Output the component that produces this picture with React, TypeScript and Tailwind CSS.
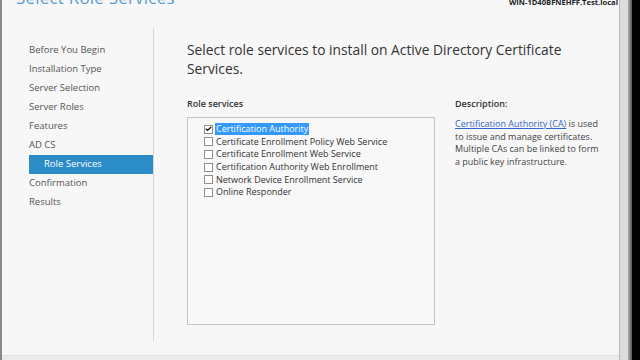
import { Check } from "lucide-react";

const steps = [
  "Before You Begin",
  "Installation Type",
  "Server Selection",
  "Server Roles",
  "Features",
  "AD CS",
  "Role Services",
  "Confirmation",
  "Results",
];

const services = [
  "Certification Authority",
  "Certificate Enrollment Policy Web Service",
  "Certificate Enrollment Web Service",
  "Certification Authority Web Enrollment",
  "Network Device Enrollment Service",
  "Online Responder",
];

export default function App() {
  return (
    <div className="w-[640px] h-[360px] overflow-hidden flex bg-black" style={{ fontFamily: '"Open Sans", "Noto Sans", sans-serif' }}>
      <div className="w-[620px] h-full flex flex-col bg-[#f7f7f7] border-l-2 border-[#8a8a8a] border-r border-r-[#b8b8b8]">
        {/* header */}
        <div className="h-[28px] flex justify-between px-[14px] overflow-hidden">
          <div className="text-[17px] leading-[20px] -mt-[12px] text-[#5b9bd1] tracking-[0.2px]">Select Role Services</div>
          <div className="text-[7.6px] leading-[8px] -mt-[2px] font-bold text-[#222] mr-[-13px]">WIN-1D40BFNEHFF.Test.local</div>
        </div>
        {/* body */}
        <div className="flex-1 flex">
          <div className="w-[152px] border-r border-[#d6d6d6] pt-[13px] mb-[14px]">
            {steps.map((s) => (
              <div
                key={s}
                className={
                  s === "Role Services"
                    ? "ml-[27px] h-[19px] flex items-center pl-[15px] bg-[#2b8cc8] text-white text-[9.5px]"
                    : "ml-[27px] h-[19px] flex items-center text-[#555] text-[9.5px]"
                }
              >
                {s}
              </div>
            ))}
          </div>
          <div className="flex-1 pl-[33px] pt-[12px]">
            <div className="text-[13.8px] leading-[19px] text-[#333] w-[420px]">
              Select role services to install on Active Directory Certificate Services.
            </div>
            <div className="flex mt-[20px] gap-[20px]">
              <div className="w-[248px]">
                <div className="text-[9px] font-semibold text-[#333] leading-[12px]">Role services</div>
                <div className="mt-[7px] h-[208px] border border-[#c4c4c4] bg-[#f8f8f8] pt-[5px] pl-[16px]">
                  {services.map((s, i) => (
                    <div key={s} className="h-[12.6px] flex items-center">
                      <div className="w-[9px] h-[9px] border border-[#8f8f8f] bg-white flex items-center justify-center">
                        {i === 0 && <Check className="w-[8px] h-[8px] text-black" strokeWidth={4} />}
                      </div>
                      <div
                        className={
                          i === 0
                            ? "ml-[2px] px-[1px] bg-[#3399ff] text-white text-[9px] leading-[12px]"
                            : "ml-[2px] px-[1px] text-[#333] text-[9px] leading-[12px]"
                        }
                      >
                        {s}
                      </div>
                    </div>
                  ))}
                </div>
              </div>
              <div className="w-[150px]">
                <div className="text-[9px] font-semibold text-[#333] leading-[12px]">Description:</div>
                <div className="mt-[8px] text-[9px] leading-[12.7px] text-[#444]">
                  <span className="text-[#3366cc] underline">Certification Authority (CA)</span> is used to issue and manage certificates. Multiple CAs can be linked to form a public key infrastructure.
                </div>
              </div>
            </div>
          </div>
        </div>
        {/* footer */}
        <div className="h-[5px] bg-[#ebebeb] border-t border-[#e0e0e0]" />
      </div>
      <div className="w-[8px] h-full bg-[#dcdcdc]" />
      <div className="w-[4px] h-full bg-gradient-to-r from-[#b0b0b0] to-[#555]" />
    </div>
  );
}
